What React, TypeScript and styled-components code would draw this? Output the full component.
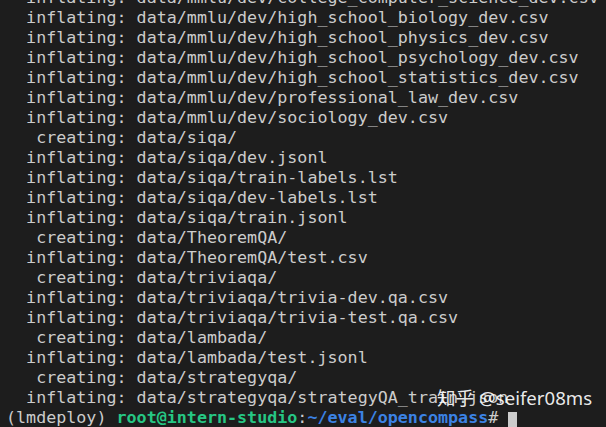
import * as React from 'react'
import styled, { createGlobalStyle } from 'styled-components'

const colours = {
  bg: '#1d1d1d',
  text: '#cccccc',
  green: '#26c784',
  blue: '#3b82e4',
}

const lines: string[] = [
  '  inflating: data/mmlu/dev/college_computer_science_dev.csv',
  '  inflating: data/mmlu/dev/high_school_biology_dev.csv',
  '  inflating: data/mmlu/dev/high_school_physics_dev.csv',
  '  inflating: data/mmlu/dev/high_school_psychology_dev.csv',
  '  inflating: data/mmlu/dev/high_school_statistics_dev.csv',
  '  inflating: data/mmlu/dev/professional_law_dev.csv',
  '  inflating: data/mmlu/dev/sociology_dev.csv',
  '   creating: data/siqa/',
  '  inflating: data/siqa/dev.jsonl',
  '  inflating: data/siqa/train-labels.lst',
  '  inflating: data/siqa/dev-labels.lst',
  '  inflating: data/siqa/train.jsonl',
  '   creating: data/TheoremQA/',
  '  inflating: data/TheoremQA/test.csv',
  '   creating: data/triviaqa/',
  '  inflating: data/triviaqa/trivia-dev.qa.csv',
  '  inflating: data/triviaqa/trivia-test.qa.csv',
  '   creating: data/lambada/',
  '  inflating: data/lambada/test.jsonl',
  '   creating: data/strategyqa/',
  '  inflating: data/strategyqa/strategyQA_train.json',
]

export default function App() {
  return (
    <>
      <GlobalStyle />
      <Terminal>
        <Output>
          {lines.map((line, i) => (
            <Line key={i}>{line}</Line>
          ))}
          <Line>
            (lmdeploy) <Bold colour={colours.green}>root@intern-studio</Bold>:
            <Bold colour={colours.blue}>~/eval/opencompass</Bold># <Cursor />
          </Line>
        </Output>
        <Watermark>知乎 @seifer08ms</Watermark>
      </Terminal>
    </>
  )
}

const GlobalStyle = createGlobalStyle`
  html, body {
    margin: 0;
    padding: 0;
    background: ${colours.bg};
  }
`

const Terminal = styled.div`
  position: relative;
  width: 606px;
  height: 427px;
  overflow: hidden;
  background: ${colours.bg};
  padding-left: 6px;
  box-sizing: border-box;
`

const Output = styled.div`
  margin-top: -13px;
  font-family: 'DejaVu Sans Mono', 'Liberation Mono', monospace;
  font-size: 16.7px;
  line-height: 20px;
  color: ${colours.text};
`

const Line = styled.div`
  white-space: pre;
  height: 20px;
`

const Bold = styled.span<{ colour: string }>`
  font-weight: bold;
  color: ${({ colour }) => colour};
`

const Cursor = styled.span`
  display: inline-block;
  width: 9px;
  height: 16px;
  background: ${colours.text};
  vertical-align: -5px;
`

const Watermark = styled.div`
  position: absolute;
  left: 437px;
  top: 386px;
  font-family: 'Noto Sans', 'Noto Sans CJK SC', sans-serif;
  font-size: 18.6px;
  line-height: 24px;
  color: rgba(255, 255, 255, 0.92);
  white-space: nowrap;
`
